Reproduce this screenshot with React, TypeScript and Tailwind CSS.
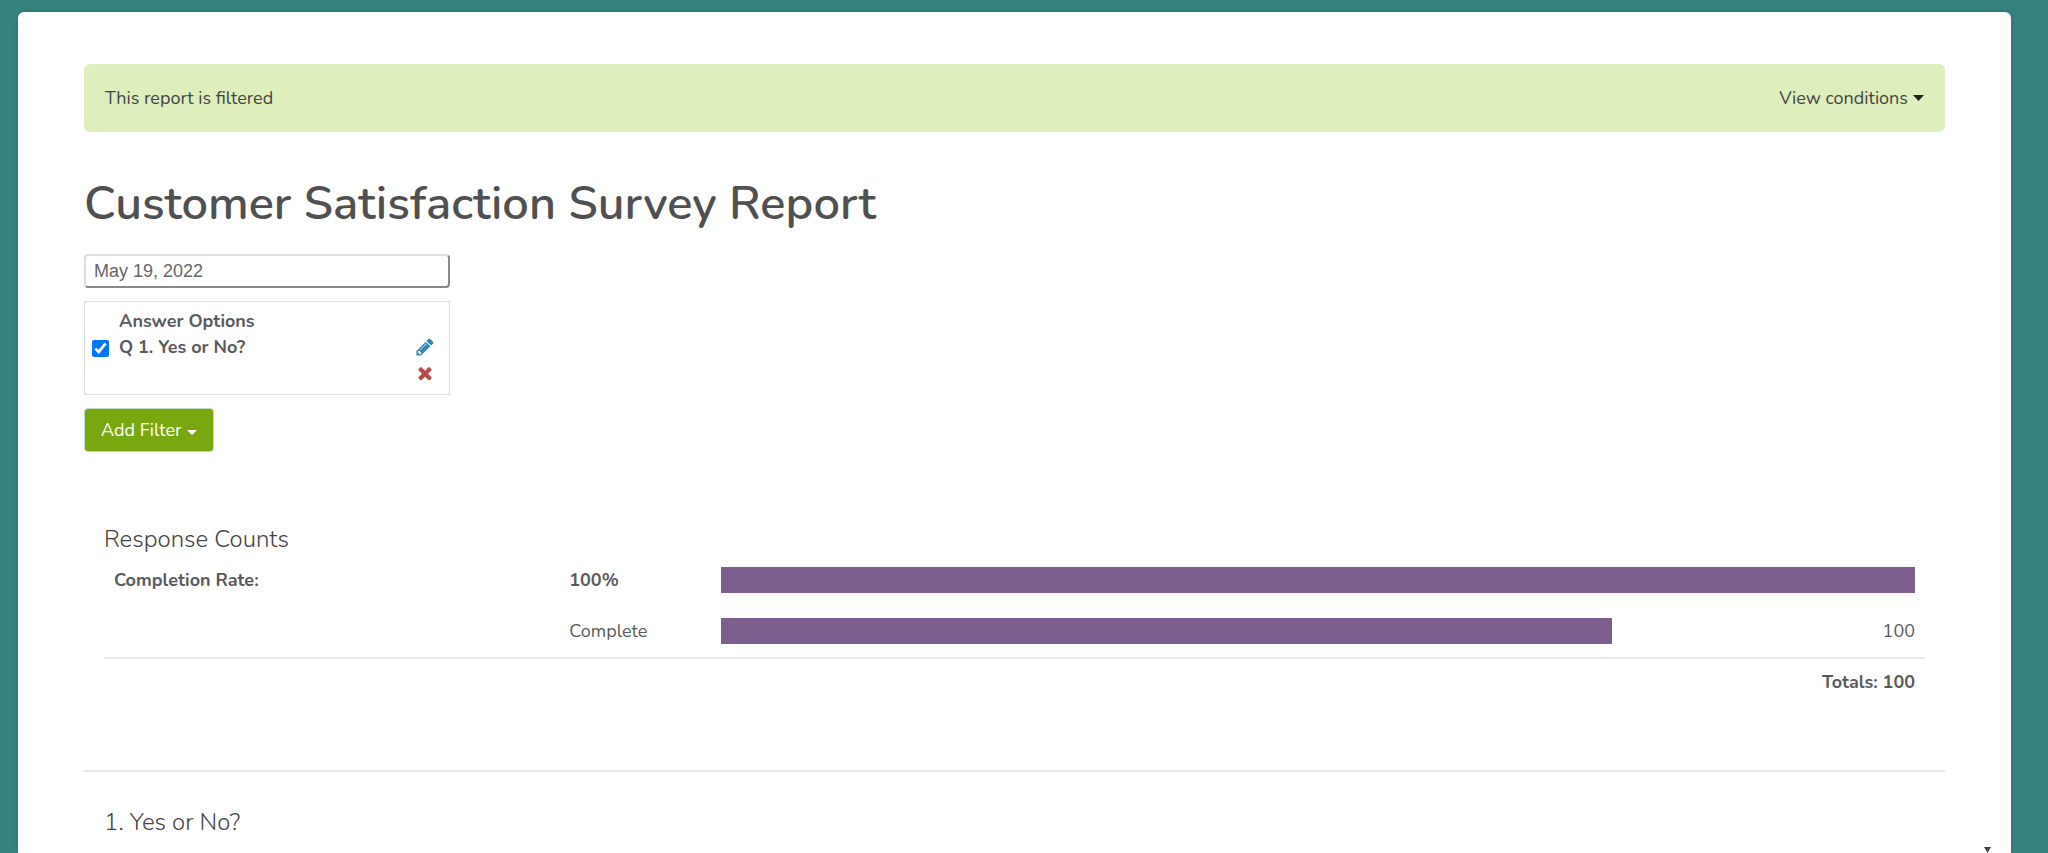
import { useState } from 'react';

const completion = { percent: 100, complete: 100, total: 100 };

const Caret = (props: { className?: string }) => (
  <svg viewBox="0 0 10 5" preserveAspectRatio="none" className={props.className} fill="currentColor" aria-hidden="true">
    <path d="M0 0h10L5 5z" />
  </svg>
);

const PencilIcon = () => (
  <svg viewBox="0 0 1792 1792" className="size-5" fill="currentColor" aria-hidden="true">
    <path d="M491 1536l91-91-235-235-91 91v107h128v128h107zm523-928q0-22-22-22-10 0-17 7l-542 542q-7 7-7 17 0 22 22 22 10 0 17-7l542-542q7-7 7-17zm-54-192l416 416-832 832h-416v-416zm683 96q0 53-37 90l-166 166-416-416 166-165q36-38 90-38 53 0 91 38l235 234q37 39 37 91z" />
  </svg>
);

const RemoveIcon = () => (
  <svg viewBox="0 0 1792 1792" className="size-5" fill="currentColor" aria-hidden="true">
    <path d="M1490 1322q0 40-28 68l-136 136q-28 28-68 28t-68-28l-294-294-294 294q-28 28-68 28t-68-28l-136-136q-28-28-28-68t28-68l294-294-294-294q-28-28-28-68t28-68l136-136q28-28 68-28t68 28l294 294 294-294q28-28 68-28t68 28l136 136q28 28 28 68t-28 68l-294 294 294 294q28 28 28 68z" />
  </svg>
);

// Horizontal bar filling its cell up to the given percentage
const Bar = (props: { percent: number }) => (
  <div className="h-[26px] bg-[#7d5f8f]" style={{ width: `${props.percent}%` }} />
);

const FilterNotice = () => (
  <div className="flex items-center justify-between rounded-md bg-[#deeebd] h-[68px] px-[21px] text-[#444]">
    <p>This report is filtered</p>
    <button className="flex items-center gap-[5px]">
      View conditions
      <Caret className="w-[11px] h-[6px] text-[#222]" />
    </button>
  </div>
);

const FilterPanel = () => {
  const [date, setDate] = useState('May 19, 2022');
  const [enabled, setEnabled] = useState(true);

  return (
    <div className="flex flex-col items-start gap-[13px] w-[366px]">
      <input
        type="text"
        aria-label="Report date"
        value={date}
        onChange={(e) => setDate(e.target.value)}
        className="w-full h-[34px] px-2 rounded-sm border-2 border-t-[#ddd] border-l-[#ddd] border-r-[#888] border-b-[#888] font-['Liberation_Sans',sans-serif] text-[#666]"
      />
      <div className="flex w-full h-[94px] border border-[#ddd] pl-[7px] pr-[14px] pt-[6px] font-bold leading-[26px]">
        <input
          id="filter-q1"
          type="checkbox"
          checked={enabled}
          onChange={(e) => setEnabled(e.target.checked)}
          className="mt-[32px] mr-[10px] size-[17px] accent-[#0075ff]"
        />
        <label htmlFor="filter-q1" className="flex-1">
          Answer Options<br />
          Q 1. Yes or No?
        </label>
        <div className="flex flex-col items-center pt-[26px]">
          <button aria-label="Edit filter" className="flex items-center h-[26px] text-[#3a87ad]">
            <PencilIcon />
          </button>
          <button aria-label="Remove filter" className="flex items-center h-[26px] text-[#b94a48]">
            <RemoveIcon />
          </button>
        </div>
      </div>
      <button className="flex items-center gap-[6px] h-[44px] px-4 rounded-sm border border-[#c5d9c0] bg-[#79a70f] text-white">
        Add Filter
        <Caret className="w-[10px] h-[5px] mt-1" />
      </button>
    </div>
  );
};

const ResponseCounts = () => (
  <section className="px-5">
    <h2 className="text-2xl leading-8 font-light text-[#444]">Response Counts</h2>
    <table className="w-full table-fixed text-left leading-[26px]">
      <colgroup>
        <col className="w-3/12" />
        <col className="w-1/12" />
        <col className="w-6/12" />
        <col className="w-2/12" />
      </colgroup>
      <tbody>
        <tr>
          <th className="px-[10px] py-[12px]">Completion Rate:</th>
          <th className="px-[10px] py-[12px]">{completion.percent}%</th>
          <td colSpan={2} className="px-[10px] py-[12px]">
            <Bar percent={completion.percent} />
          </td>
        </tr>
        <tr className="border-b-2 border-[#e8e8e8]">
          <td />
          <td className="px-[10px] py-[13px]">Complete</td>
          <td className="px-[10px] py-[13px]">
            <Bar percent={(completion.complete / completion.total) * 100} />
          </td>
          <td className="px-[10px] py-[13px] text-right">{completion.complete}</td>
        </tr>
        <tr>
          <td colSpan={4} className="px-[10px] py-[10px] text-right font-bold">
            Totals: {completion.total}
          </td>
        </tr>
      </tbody>
    </table>
  </section>
);

export default function App() {
  return (
    <div className="flex min-h-screen bg-[#35827e] pt-3 pl-[18px] pr-[37px] font-['Nunito',Lato,sans-serif] text-[18px] leading-[26px] text-[#5a5a5a]">
      <main className="flex flex-1 flex-col rounded-t-md bg-white px-[66px] pt-[52px] shadow-[0_0_4px_rgba(0,0,0,0.15)]">
        <FilterNotice />
        <h1 className="mt-10 mb-[18px] text-[47px] leading-16 font-semibold text-[#505050]">
          Customer Satisfaction Survey Report
        </h1>
        <FilterPanel />
        <div className="mt-[71px]">
          <ResponseCounts />
        </div>
        <hr className="mt-[65px] border-t-2 border-[#e5e5e5]" />
        <h2 className="mt-[34px] px-5 text-2xl leading-8 font-light text-[#444]">1. Yes or No?</h2>
        <button aria-label="Expand question" className="flex -mr-[46px] mt-[9px] self-end text-[#444]">
          <Caret className="w-[7px] h-[6px]" />
        </button>
      </main>
    </div>
  );
}
